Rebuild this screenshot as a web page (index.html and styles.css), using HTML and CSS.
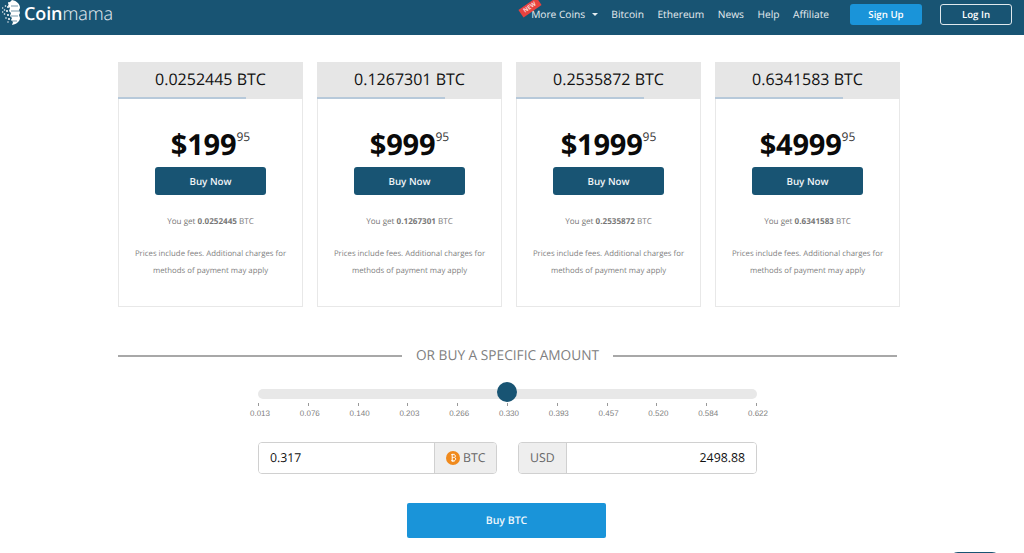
FILE: index.html
```html
<!DOCTYPE html>
<html lang="en">
<head>
<meta charset="utf-8">
<title>Coinmama</title>
<link rel="stylesheet" href="styles.css">
</head>
<body>
<header class="topbar">
  <a class="brand">
    <svg class="brand-mark" viewBox="0 0 18 26" width="18" height="26">
      <g fill="#fff">
        <path d="M10 0c5 1 8 4 8 8l-1 2 1 3-1 2 1 3c0 3-3 6-8 7l1-3-2-2 1-2-2-2 1-3-2-2 1-3-2-2 1-3z"/>
        <circle cx="7" cy="3" r="1"/><circle cx="6" cy="7" r="1"/><circle cx="5" cy="11" r="1"/><circle cx="6" cy="15" r="1"/><circle cx="7" cy="19" r="1"/>
        <circle cx="3.500" cy="6" r=".8"/><circle cx="2.500" cy="10" r=".8"/><circle cx="2.500" cy="14" r=".8"/><circle cx="4" cy="18" r=".8"/><circle cx=".7" cy="12" r=".7"/><circle cx=".7" cy="8" r=".7"/><circle cx="6" cy="22" r=".7"/>
      </g>
      <path d="M9 6h7M9 11h8M9 16h7M10 21h5" stroke="#185473" stroke-width=".6"/>
    </svg>
    <span class="brand-name"><b>Coin</b>mama</span>
  </a>
  <nav class="nav">
    <a class="nav-link nav-new"><span class="ribbon">NEW</span>More Coins <i class="caret"></i></a>
    <a class="nav-link">Bitcoin</a>
    <a class="nav-link">Ethereum</a>
    <a class="nav-link">News</a>
    <a class="nav-link">Help</a>
    <a class="nav-link">Affiliate</a>
  </nav>
  <a class="btn-signup">Sign Up</a>
  <a class="btn-login">Log In</a>
</header>
<main>
  <section class="cards">
    <article class="card">
      <div class="card-head">0.0252445 BTC</div>
      <div class="price">$199<sup>95</sup></div>
      <a class="btn-buy">Buy Now</a>
      <p class="get">You get <b>0.0252445</b> BTC</p>
      <p class="fees">Prices include fees. Additional charges for methods of payment may apply</p>
    </article>
    <article class="card">
      <div class="card-head">0.1267301 BTC</div>
      <div class="price">$999<sup>95</sup></div>
      <a class="btn-buy">Buy Now</a>
      <p class="get">You get <b>0.1267301</b> BTC</p>
      <p class="fees">Prices include fees. Additional charges for methods of payment may apply</p>
    </article>
    <article class="card">
      <div class="card-head">0.2535872 BTC</div>
      <div class="price">$1999<sup>95</sup></div>
      <a class="btn-buy">Buy Now</a>
      <p class="get">You get <b>0.2535872</b> BTC</p>
      <p class="fees">Prices include fees. Additional charges for methods of payment may apply</p>
    </article>
    <article class="card">
      <div class="card-head">0.6341583 BTC</div>
      <div class="price">$4999<sup>95</sup></div>
      <a class="btn-buy">Buy Now</a>
      <p class="get">You get <b>0.6341583</b> BTC</p>
      <p class="fees">Prices include fees. Additional charges for methods of payment may apply</p>
    </article>
  </section>
  <h2 class="divider"><span>OR BUY A SPECIFIC AMOUNT</span></h2>
  <section class="slider">
    <div class="track"><div class="thumb"></div></div>
    <div class="ticks">
      <span class="tick">0.013</span><span class="tick">0.076</span><span class="tick">0.140</span><span class="tick">0.203</span><span class="tick">0.266</span><span class="tick">0.330</span><span class="tick">0.393</span><span class="tick">0.457</span><span class="tick">0.520</span><span class="tick">0.584</span><span class="tick">0.622</span>
    </div>
  </section>
  <section class="inputs">
    <div class="field">
      <div class="value">0.317</div>
      <div class="addon addon-right">
        <svg class="btc" viewBox="0 0 14 14" width="14" height="14"><circle cx="7" cy="7" r="7" fill="#f08a1d"/><path d="M5.200 3.600h2.400c1.100 0 1.800.6 1.800 1.500 0 .7-.4 1.100-.9 1.300.7.2 1.200.7 1.200 1.500 0 1.100-.8 1.800-2 1.800H5.200m1-3.300h1.600M6.200 3.600v6.600M6.700 2.800v.8m1.200-.8v.8m-1.200 6.600v.8m1.200-.8v.8" fill="none" stroke="#fff" stroke-width="1"/></svg>
        BTC
      </div>
    </div>
    <div class="field">
      <div class="addon addon-left">USD</div>
      <div class="value value-right">2498.88</div>
    </div>
  </section>
  <div class="submit-row"><a class="btn-submit">Buy BTC</a></div>
  <a class="corner-tab"></a>
</main>
</body>
</html>
```
FILE: styles.css
```css
* { box-sizing: border-box; }
html, body { margin: 0; padding: 0; height: 553px; overflow: hidden; }
body { background: #fff; font-family: "Open Sans", sans-serif; color: #111; text-rendering: geometricPrecision; }

.topbar { height: 35px; background: #185473; display: flex; align-items: center; padding-left: 2px; color: #e6edf1; }
.brand { display: flex; align-items: center; gap: 4px; margin-top: -9px; }
.brand-name { font-size: 18px; font-weight: 300; color: #e8eff3; letter-spacing: -.1px; margin-top: 1px; }
.brand-name b { font-weight: 600; color: #fff; }
.nav { display: flex; margin-left: auto; gap: 13.500px; font-size: 10.200px; margin-top: -8px; }
.nav-link { position: relative; white-space: nowrap; }
.ribbon { position: absolute; left: -12px; top: -4px; width: 22px; height: 9px; background: #e8433f; color: #fbd5d2; font-size: 6px; font-weight: 700; line-height: 9px; text-align: center; transform: rotate(-35deg); }
.caret { display: inline-block; margin: 0 0 2px 4px; border: 3px solid transparent; border-top-color: #e6edf1; border-bottom: 0; }
.btn-signup, .btn-login { width: 72px; height: 21px; border-radius: 3px; font-size: 9.700px; font-weight: 600; line-height: 21px; text-align: center; margin-top: -7px; }
.btn-signup { background: #1a94d9; color: #fff; margin-left: 21px; }
.btn-login { border: 1px solid #dfe8ed; line-height: 19px; margin-left: 18px; margin-right: 12px; color: #fff; }

.cards { display: flex; gap: 14px; margin: 27px 0 0 118px; width: 782px; }
.card { width: 185px; height: 245px; border: 1px solid #e8e8e8; text-align: center; position: relative; display: flex; flex-direction: column; align-items: center; }
.card-head { align-self: stretch; height: 37px; margin: -1px -1px 0; background: #e6e6e6; font-size: 16px; line-height: 35px; color: #111; position: relative; }
.card-head::after { content: ""; position: absolute; left: 0; bottom: 0; width: 128px; height: 2px; background: #b7c9da; }
.price { font-size: 29px; font-weight: 700; line-height: 40px; margin-top: 26px; color: #0a0a0a; letter-spacing: -.2px; }
.price sup { font-size: 12px; font-weight: 400; vertical-align: 14px; line-height: 0; letter-spacing: 0; color: #333; }
.btn-buy { width: 111px; height: 28px; margin-top: 2px; background: #185473; border-radius: 3px; color: #f1f5f7; font-size: 9.800px; font-weight: 600; line-height: 29px; }
.get { margin: 19px 0 0; font-size: 8.100px; color: #777; line-height: 15px; }
.fees { margin: 17px 0 0; width: 155px; font-size: 7.800px; color: #808080; line-height: 17px; }

.divider { display: flex; align-items: center; gap: 14px; margin: 40px 0 0 118px; width: 779px; font-size: 13.700px; font-weight: 400; color: #808080; line-height: 18px; }
.divider::before, .divider::after { content: ""; flex: 1; height: 2px; background: #a8a8a8; }

.slider { margin: 24px 0 0 258px; width: 499px; }
.track { height: 10px; background: #e8e8e8; border-radius: 5px; position: relative; }
.thumb { position: absolute; left: 239px; top: -7px; width: 20px; height: 20px; border-radius: 50%; background: #185473; }
.ticks { display: flex; justify-content: space-between; margin: 4px -9px 0 -10px; }
.tick { position: relative; width: 20px; padding: 6px 0 0 4px; font-family: "Liberation Sans", sans-serif; font-size: 8px; color: #808080; line-height: 10px; text-align: center; white-space: nowrap; display: flex; justify-content: center; }
.tick::before { content: ""; position: absolute; top: 0; left: 10px; width: 1px; height: 3px; background: #999; }

.inputs { display: flex; gap: 21px; margin: 23px 0 0 258px; width: 499px; }
.field { width: 239px; height: 32px; border: 1px solid #d0d0d0; border-radius: 4px; display: flex; overflow: hidden; font-size: 12.300px; }
.value { flex: 1; padding: 0 11px; line-height: 30px; color: #111; background: #fff; }
.value-right { text-align: right; }
.addon { background: #eee; color: #666; line-height: 30px; display: flex; align-items: center; gap: 3px; }
.addon-right { width: 62px; border-left: 1px solid #d0d0d0; padding-left: 11px; }
.addon-left { width: 48px; border-right: 1px solid #d0d0d0; padding-left: 11px; }

.submit-row { display: flex; justify-content: center; margin: 29px 0 0 -11px; }
.btn-submit { width: 199px; height: 35px; background: #1a94d9; border-radius: 2px; color: #eef7fc; font-size: 10.500px; font-weight: 600; line-height: 36px; text-align: center; }

.corner-tab { position: absolute; left: 950px; top: 552px; width: 50px; height: 8px; background: #185473; border-radius: 8px 8px 0 0; }
```
